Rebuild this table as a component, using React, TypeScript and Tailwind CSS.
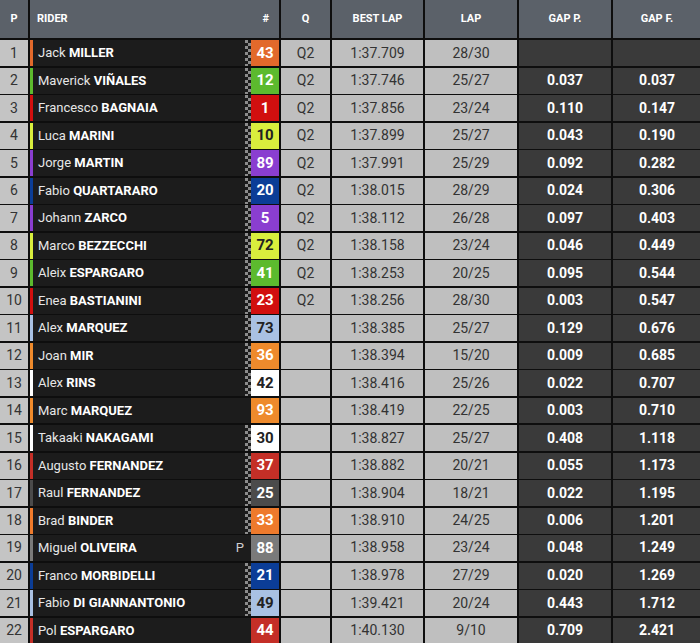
import React from 'react'

interface Row {
  first: string
  last: string
  num: string
  box: string
  stripe: string
  dark?: boolean
  q?: string
  best: string
  lap: string
  gapP: string
  gapF: string
  flag?: 'checker' | 'P' | 'none'
}

const rows: Row[] = [
  { first: 'Jack', last: 'MILLER', num: '43', box: 'bg-[#e2692b]', stripe: 'bg-[#e2692b]', q: 'Q2', best: '1:37.709', lap: '28/30', gapP: '', gapF: '' },
  { first: 'Maverick', last: 'VIÑALES', num: '12', box: 'bg-[#5cba2e]', stripe: 'bg-[#5cba2e]', q: 'Q2', best: '1:37.746', lap: '25/27', gapP: '0.037', gapF: '0.037' },
  { first: 'Francesco', last: 'BAGNAIA', num: '1', box: 'bg-[#d10f0f]', stripe: 'bg-[#d10f0f]', q: 'Q2', best: '1:37.856', lap: '23/24', gapP: '0.110', gapF: '0.147' },
  { first: 'Luca', last: 'MARINI', num: '10', box: 'bg-[#d9ee3d]', stripe: 'bg-[#d9ee3d]', dark: true, q: 'Q2', best: '1:37.899', lap: '25/27', gapP: '0.043', gapF: '0.190' },
  { first: 'Jorge', last: 'MARTIN', num: '89', box: 'bg-[#8a3ed0]', stripe: 'bg-[#8a3ed0]', q: 'Q2', best: '1:37.991', lap: '25/29', gapP: '0.092', gapF: '0.282' },
  { first: 'Fabio', last: 'QUARTARARO', num: '20', box: 'bg-[#0b3d97]', stripe: 'bg-[#0b3d97]', q: 'Q2', best: '1:38.015', lap: '28/29', gapP: '0.024', gapF: '0.306' },
  { first: 'Johann', last: 'ZARCO', num: '5', box: 'bg-[#8a3ed0]', stripe: 'bg-[#8a3ed0]', q: 'Q2', best: '1:38.112', lap: '26/28', gapP: '0.097', gapF: '0.403' },
  { first: 'Marco', last: 'BEZZECCHI', num: '72', box: 'bg-[#d9ee3d]', stripe: 'bg-[#d9ee3d]', dark: true, q: 'Q2', best: '1:38.158', lap: '23/24', gapP: '0.046', gapF: '0.449' },
  { first: 'Aleix', last: 'ESPARGARO', num: '41', box: 'bg-[#5cba2e]', stripe: 'bg-[#5cba2e]', q: 'Q2', best: '1:38.253', lap: '20/25', gapP: '0.095', gapF: '0.544' },
  { first: 'Enea', last: 'BASTIANINI', num: '23', box: 'bg-[#d10f0f]', stripe: 'bg-[#d10f0f]', q: 'Q2', best: '1:38.256', lap: '28/30', gapP: '0.003', gapF: '0.547' },
  { first: 'Alex', last: 'MARQUEZ', num: '73', box: 'bg-[#a9c1e3]', stripe: 'bg-[#a9c1e3]', dark: true, best: '1:38.385', lap: '25/27', gapP: '0.129', gapF: '0.676' },
  { first: 'Joan', last: 'MIR', num: '36', box: 'bg-[#ee8a2c]', stripe: 'bg-[#ee8a2c]', best: '1:38.394', lap: '15/20', gapP: '0.009', gapF: '0.685' },
  { first: 'Alex', last: 'RINS', num: '42', box: 'bg-white', stripe: 'bg-white', dark: true, best: '1:38.416', lap: '25/26', gapP: '0.022', gapF: '0.707' },
  { first: 'Marc', last: 'MARQUEZ', num: '93', box: 'bg-[#ee8a2c]', stripe: 'bg-[#ee8a2c]', best: '1:38.419', lap: '22/25', gapP: '0.003', gapF: '0.710', flag: 'none' },
  { first: 'Takaaki', last: 'NAKAGAMI', num: '30', box: 'bg-white', stripe: 'bg-white', dark: true, best: '1:38.827', lap: '25/27', gapP: '0.408', gapF: '1.118' },
  { first: 'Augusto', last: 'FERNANDEZ', num: '37', box: 'bg-[#c42f27]', stripe: 'bg-[#c42f27]', best: '1:38.882', lap: '20/21', gapP: '0.055', gapF: '1.173' },
  { first: 'Raul', last: 'FERNANDEZ', num: '25', box: 'bg-[#4b4b4b]', stripe: 'bg-[#4b4b4b]', best: '1:38.904', lap: '18/21', gapP: '0.022', gapF: '1.195' },
  { first: 'Brad', last: 'BINDER', num: '33', box: 'bg-[#ee7a2c]', stripe: 'bg-[#ee7a2c]', best: '1:38.910', lap: '24/25', gapP: '0.006', gapF: '1.201' },
  { first: 'Miguel', last: 'OLIVEIRA', num: '88', box: 'bg-[#7a7a7a]', stripe: 'bg-[#7a7a7a]', best: '1:38.958', lap: '23/24', gapP: '0.048', gapF: '1.249', flag: 'P' },
  { first: 'Franco', last: 'MORBIDELLI', num: '21', box: 'bg-[#0b3d97]', stripe: 'bg-[#0b3d97]', best: '1:38.978', lap: '27/29', gapP: '0.020', gapF: '1.269' },
  { first: 'Fabio', last: 'DI GIANNANTONIO', num: '49', box: 'bg-[#a9c1e3]', stripe: 'bg-[#a9c1e3]', dark: true, best: '1:39.421', lap: '20/24', gapP: '0.443', gapF: '1.712' },
  { first: 'Pol', last: 'ESPARGARO', num: '44', box: 'bg-[#c42f27]', stripe: 'bg-[#c42f27]', best: '1:40.130', lap: '9/10', gapP: '0.709', gapF: '2.421', flag: 'none' },
]

const cols = 'grid grid-cols-[28px_249px_49px_91px_92px_92px_88px] gap-x-[2px]'

// small chequered strip shown before the bike number
function Checker() {
  return (
    <svg width="6" height="26" viewBox="0 0 6 26" className="shrink-0">
      {Array.from({ length: 9 }).map((_, i) => (
        <rect key={i} x={i % 2 === 0 ? 0 : 3} y={i * 3} width="3" height="3" fill="#8c8c8c" />
      ))}
    </svg>
  )
}

export default function App() {
  return (
    <div className="w-[700px] h-[643px] bg-[#0e0e0e] overflow-hidden flex flex-col gap-y-[2px]" style={{ fontFamily: 'Roboto, "Liberation Sans", sans-serif' }}>
      <div className={`${cols} h-[38px] shrink-0 text-white text-[11px] font-bold`}>
        <div className="bg-[#5b6169] flex items-center justify-center">P</div>
        <div className="bg-[#5b6169] flex items-center justify-between pl-[7px] pr-[10px]">
          <span>RIDER</span>
          <span>#</span>
        </div>
        <div className="bg-[#5b6169] flex items-center justify-center">Q</div>
        <div className="bg-[#5b6169] flex items-center justify-center">BEST LAP</div>
        <div className="bg-[#5b6169] flex items-center justify-center">LAP</div>
        <div className="bg-[#5b6169] flex items-center justify-center">GAP P.</div>
        <div className="bg-[#5b6169] flex items-center justify-center">GAP F.</div>
      </div>

      {rows.map((r, i) => (
        <div key={i} className={`${cols} h-[25.5px] shrink-0 text-[14px]`}>
          <div className="bg-[#c4c4c4] text-[#333] flex items-center justify-center">{i + 1}</div>
          <div className="flex bg-[#1c1c1c]">
            <div className={`w-[3px] ${r.stripe}`} />
            <div className="flex-1 flex items-center pl-[5px] text-[13px] text-[#e6e6e6] whitespace-nowrap">
              {r.first}&nbsp;<span className="font-bold text-white">{r.last}</span>
            </div>
            {r.flag === 'P' ? (
              <div className="flex items-center pr-[7px] text-[13px] text-[#cfcfcf]">P</div>
            ) : r.flag === 'none' ? (
              <div className="w-[6px]" />
            ) : (
              <div className="flex items-center">
                <Checker />
              </div>
            )}
            <div className={`w-[28px] ${r.box} flex items-center justify-center text-[15px] font-bold ${r.dark ? 'text-[#222]' : 'text-white'}`}>
              {r.num}
            </div>
          </div>
          <div className="bg-[#bfbfbf] text-[#333] flex items-center justify-center">{r.q}</div>
          <div className="bg-[#bfbfbf] text-[#333] flex items-center justify-center">{r.best}</div>
          <div className="bg-[#bfbfbf] text-[#333] flex items-center justify-center">{r.lap}</div>
          <div className="bg-[#3a3a3a] text-white font-bold flex items-center justify-center">{r.gapP}</div>
          <div className="bg-[#3a3a3a] text-white font-bold flex items-center justify-center">{r.gapF}</div>
        </div>
      ))}
    </div>
  )
}
